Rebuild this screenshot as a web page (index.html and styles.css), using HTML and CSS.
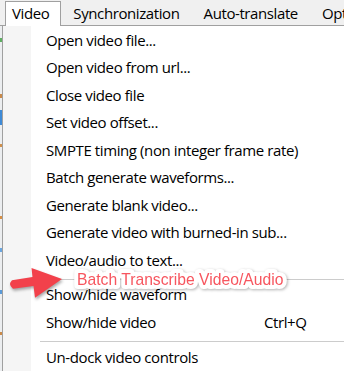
FILE: index.html
```html
<!DOCTYPE html>
<html lang="en">
<head>
    <meta charset="UTF-8">
    <meta name="viewport" content="width=device-width, initial-scale=1.0">
    <title>Video menu</title>
    <link rel="stylesheet" href="styles.css">
</head>
<body>
    <div class="menubar">
        <div class="menu-title open">Video</div>
        <div class="menu-title">Synchronization</div>
        <div class="menu-title">Auto-translate</div>
        <div class="menu-title">Options</div>
    </div>

    <div class="workspace">
        <div class="behind"></div>
        <div class="dropdown">
            <div class="item"><span>Open video file...</span></div>
            <div class="item"><span>Open video from url...</span></div>
            <div class="item"><span>Close video file</span></div>
            <div class="item"><span>Set video offset...</span></div>
            <div class="item"><span>SMPTE timing (non integer frame rate)</span></div>
            <div class="item"><span>Batch generate waveforms...</span></div>
            <div class="item"><span>Generate blank video...</span></div>
            <div class="item"><span>Generate video with burned-in sub...</span></div>
            <div class="item"><span>Video/audio to text...</span></div>
            <div class="separator"></div>
            <div class="item"><span>Show/hide waveform</span></div>
            <div class="item"><span>Show/hide video</span><span class="shortcut">Ctrl+Q</span></div>
            <div class="separator"></div>
            <div class="item"><span>Un-dock video controls</span></div>
        </div>
    </div>

    <!-- annotation drawn on top of the screenshot -->
    <svg class="arrow" width="70" height="45" viewBox="0 0 70 45">
        <path d="M62 19 L31.5 8 L32.5 17 L12 20.3 Q7.5 24.5 13 28.7 L33.5 26 L35 37.7 Z" fill="#f2414b"/>
    </svg>
    <svg class="callout" width="236" height="36" viewBox="0 0 236 36">
        <text x="7" y="22.7">Batch Transcribe Video/Audio</text>
    </svg>
</body>
</html>
```

FILE: styles.css
```css
* {
    margin: 0;
    padding: 0;
    box-sizing: border-box;
}

body {
    width: 344px;
    height: 372px;
    overflow: hidden;
    position: relative;
    background: white;
    font-family: 'Segoe UI', 'Open Sans', sans-serif;
    font-size: 15px;
    letter-spacing: -0.4px;
    color: #000;
}

.menubar {
    display: flex;
    height: 26px;
    background: #f0f0f0;
    border-bottom: 1px solid #a0a0a0;
    white-space: nowrap;
    letter-spacing: -0.4px;
}

.menu-title {
    padding: 2px 12px 0 12px;
    line-height: 23px;
}

.menu-title.open {
    align-self: flex-start;
    margin: 1px 0 0 5px;
    padding: 0 11px 2px 6px;
    background: white;
    border: 1px solid #a0a0a0;
    border-bottom: none;
}

.workspace {
    display: flex;
}

.behind {
    width: 2px;
    flex-shrink: 0;
    background: linear-gradient(to bottom,
        #eceef0 0 12px, #5fae62 12px 16px, #eceef0 16px 68px,
        #c98a4a 68px 72px, #eceef0 72px 84px, #3e8ad6 84px 99px,
        #eceef0 99px 118px, #d0904c 118px 121px, #eceef0 121px 190px,
        #d68f45 190px 193px, #eceef0 193px 222px, #6aa6e0 222px 226px,
        #eceef0 226px 264px, #5a9ad8 264px 268px, #eceef0 268px 306px,
        #cc8a48 306px 309px, #eceef0 309px);
}

.dropdown {
    width: 400px;
    flex-shrink: 0;
    padding-top: 0.6px;
    border-left: 1px solid #a0a0a0;
    background: linear-gradient(to right, #f5f5f5 28px, white 28px);
}

.item {
    display: grid;
    grid-template-columns: 218px auto;
    height: 27.5px;
    line-height: 27.5px;
    padding-left: 43px;
    white-space: nowrap;
}

.separator {
    height: 1px;
    margin: 5px 0 1.4px 37px;
    background: #cccccc;
}

.arrow {
    position: absolute;
    left: 0;
    top: 260px;
    filter: drop-shadow(1px 2px 1.5px rgba(0, 0, 0, 0.35));
}

.callout {
    position: absolute;
    left: 70px;
    top: 262px;
    filter: drop-shadow(1px 1.5px 1.5px rgba(0, 0, 0, 0.3));
}

.callout text {
    font-family: 'Liberation Sans', Arial, sans-serif;
    font-size: 15.7px;
    letter-spacing: 0;
    fill: #f7565f;
    stroke: #fff;
    stroke-width: 8px;
    stroke-linejoin: round;
    paint-order: stroke fill;
}
```
